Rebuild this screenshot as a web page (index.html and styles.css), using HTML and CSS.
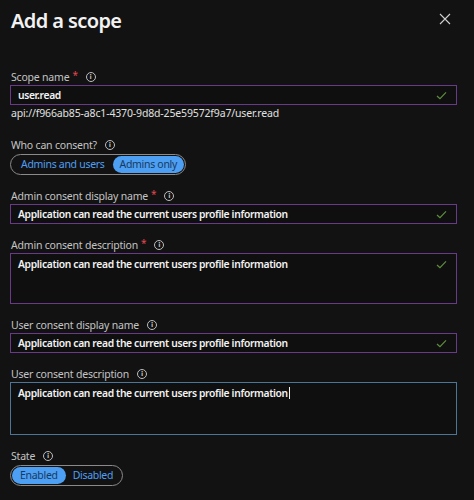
FILE: index.html
```html
<!DOCTYPE html>
<html lang="en">
<head>
<meta charset="utf-8">
<title>Add a scope</title>
<link rel="stylesheet" href="styles.css">
</head>
<body>
<div class="panel">
  <div class="header">
    <h1 class="title">Add a scope</h1>
    <button class="close" aria-label="Close">
      <svg width="12" height="12" viewBox="0 0 12 12"><path d="M1 1L11 11M11 1L1 11" stroke="#d0d0d0" stroke-width="1.1" fill="none"/></svg>
    </button>
  </div>

  <div class="form">
    <div class="field f-scope">
      <div class="label">Scope name <span class="req">*</span><span class="info">i</span></div>
      <div class="input valid"><span class="val">user.read</span><svg class="check" viewBox="0 0 12 10"><path d="M1 5.5L4.3 8.6L11 1.5" stroke="#5f8f3e" stroke-width="1.3" fill="none"/></svg></div>
      <div class="hint">api://f966ab85-a8c1-4370-9d8d-25e59572f9a7/user.read</div>
    </div>

    <div class="field">
      <div class="label">Who can consent?<span class="info">i</span></div>
      <div class="toggle t-consent">
        <span class="opt">Admins and users</span>
        <span class="opt on">Admins only</span>
      </div>
    </div>

    <div class="field">
      <div class="label">Admin consent display name <span class="req">*</span><span class="info">i</span></div>
      <div class="input valid"><span class="val">Application can read the current users profile information</span><svg class="check" viewBox="0 0 12 10"><path d="M1 5.5L4.3 8.6L11 1.5" stroke="#5f8f3e" stroke-width="1.3" fill="none"/></svg></div>
    </div>

    <div class="field">
      <div class="label">Admin consent description <span class="req">*</span><span class="info">i</span></div>
      <div class="input area valid a1"><span class="val">Application can read the current users profile information</span><svg class="check" viewBox="0 0 12 10"><path d="M1 5.5L4.3 8.6L11 1.5" stroke="#5f8f3e" stroke-width="1.3" fill="none"/></svg></div>
    </div>

    <div class="field">
      <div class="label">User consent display name<span class="info">i</span></div>
      <div class="input valid"><span class="val">Application can read the current users profile information</span><svg class="check" viewBox="0 0 12 10"><path d="M1 5.5L4.3 8.6L11 1.5" stroke="#5f8f3e" stroke-width="1.3" fill="none"/></svg></div>
    </div>

    <div class="field">
      <div class="label">User consent description<span class="info">i</span></div>
      <div class="input area focus a2"><span class="val">Application can read the current users profile information<span class="caret"></span></span></div>
    </div>

    <div class="field">
      <div class="label">State<span class="info">i</span></div>
      <div class="toggle t-state">
        <span class="opt on">Enabled</span>
        <span class="opt">Disabled</span>
      </div>
    </div>
  </div>
</div>
</body>
</html>
```

FILE: styles.css
```css
html, body {
  margin: 0;
  padding: 0;
  background: #121212;
}
body {
  font-family: "Noto Sans", "Open Sans", sans-serif;
  color: #e6e6e6;
  width: 474px;
  height: 500px;
  overflow: hidden;
}
.panel {
  padding: 0 17px 0 10px;
}
.header {
  display: flex;
  justify-content: space-between;
  align-items: flex-start;
  height: 70px;
}
.title {
  margin: 6px 0 0 1px;
  font-size: 20px;
  font-weight: 600;
  line-height: 30px;
  color: #f2f2f2;
  letter-spacing: -0.6px;
}
.close {
  margin: 13px 6px 0 0;
  padding: 0;
  border: 0;
  background: transparent;
  width: 12px;
  height: 12px;
  display: flex;
}
.form {
  display: flex;
  flex-direction: column;
  gap: 14px;
}
.f-scope {
  margin-bottom: 4px;
}
.field {
  display: flex;
  flex-direction: column;
}
.label {
  display: flex;
  align-items: center;
  font-size: 10.5px;
  letter-spacing: -0.2px;
  line-height: 14px;
  height: 14px;
  color: #c4c4c4;
  margin: 0 0 1px 1px;
}
.req {
  color: #e0484e;
  margin-left: 3px;
  font-size: 10px;
  position: relative;
  top: -2px;
}
.info {
  display: inline-flex;
  align-items: center;
  justify-content: center;
  width: 8px;
  height: 8px;
  border: 1px solid #bdbdbd;
  border-radius: 50%;
  font-size: 6.5px;
  line-height: 1;
  color: #bdbdbd;
  margin-left: 8px;
  font-family: "DejaVu Sans", sans-serif;
  font-weight: 700;
  letter-spacing: 0;
}
.input {
  box-sizing: border-box;
  height: 20px;
  border: 1px solid #6a3a8a;
  background: #0f0f0f;
  display: flex;
  align-items: center;
  padding: 0 9px 0 7px;
  justify-content: space-between;
  font-size: 10.3px;
  letter-spacing: -0.35px;
  font-weight: 600;
  color: #f2f2f2;
}
.input .val {
  white-space: nowrap;
}
.check {
  width: 11px;
  height: 9px;
  flex: none;
}
.area {
  align-items: flex-start;
  padding-top: 3px;
}
.area .check {
  margin-top: 3px;
}
.a1 { height: 51px; }
.a2 { height: 53px; border-color: #4d7597; }
.caret {
  display: inline-block;
  width: 1px;
  height: 12px;
  background: #f2f2f2;
  vertical-align: -2px;
  margin-left: 1px;
}
.hint {
  font-size: 10.5px;
  letter-spacing: -0.15px;
  line-height: 14px;
  color: #e0e0e0;
  margin: 1px 0 0 1px;
}
.toggle {
  align-self: flex-start;
  display: flex;
  align-items: center;
  box-sizing: border-box;
  height: 21px;
  border: 1px solid #8a8a8a;
  border-radius: 11px;
  padding: 0 1px;
  margin-top: 1px;
}
.opt {
  font-size: 10.5px;
  letter-spacing: -0.3px;
  line-height: 17px;
  color: #4f9ff0;
  padding: 0 7px;
  border-radius: 9px;
  white-space: nowrap;
}
.opt.on {
  background: #4d9ff3;
  color: #183a60;
}
.t-consent .opt:first-child { padding: 0 8px 0 9px; }
.t-state .opt:first-child { padding: 0 8px; }
.t-state .opt:last-child { padding: 0 8px 0 7px; }
```
